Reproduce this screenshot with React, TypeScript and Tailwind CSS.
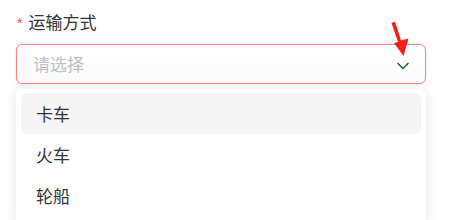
const options = ['卡车', '火车', '轮船'];

export default function App() {
  return (
    <div
      className="relative h-[220px] w-[452px] overflow-hidden bg-white"
      style={{ fontFamily: '"Noto Sans CJK SC", "Noto Sans", sans-serif' }}
    >
      <div className="px-4 pt-[9px]">
        <label className="flex h-[26px] items-center gap-[5px] text-[17px] leading-[26px] text-[#333]">
          <span className="relative top-[2px] text-[16px] text-[#f56c6c]">*</span>
          运输方式
        </label>

        <div className="mt-[9px] flex h-10 w-[410px] items-center justify-between rounded-md border border-[#f08585] bg-gradient-to-b from-white to-[#fafafa] pl-4 pr-[15px] shadow-[0_0_3px_rgba(245,108,108,0.25)]">
          <span className="text-[17px] text-[#c0c0c0]">请选择</span>
          <svg width="14" height="10" viewBox="0 0 14 10" className="mt-[4px]">
            <polyline points="1.5,2 7,7.5 12.5,2" fill="none" stroke="#1a5f2e" strokeWidth="1.4" />
          </svg>
        </div>

        <ul className="mt-[5px] w-[410px] rounded-md bg-white px-[5px] pt-[4px] pb-2 shadow-[0_2px_12px_rgba(0,0,0,0.12)]">
          {options.map((o, i) => (
            <li
              key={o}
              className={`flex h-[41px] items-center rounded-md px-[15px] text-[17px] text-[#333] ${
                i === 0 ? 'bg-[#f5f5f5]' : ''
              }`}
            >
              {o}
            </li>
          ))}
        </ul>
      </div>

      {/* annotation arrow */}
      <svg className="absolute left-[388px] top-[18px]" width="24" height="42" viewBox="0 0 24 42">
        <polygon points="3.5,5 7,3.8 13,22.5 20.5,20.5 15.5,38 6,25 10,24" fill="#ff1a1a" />
      </svg>
    </div>
  );
}
